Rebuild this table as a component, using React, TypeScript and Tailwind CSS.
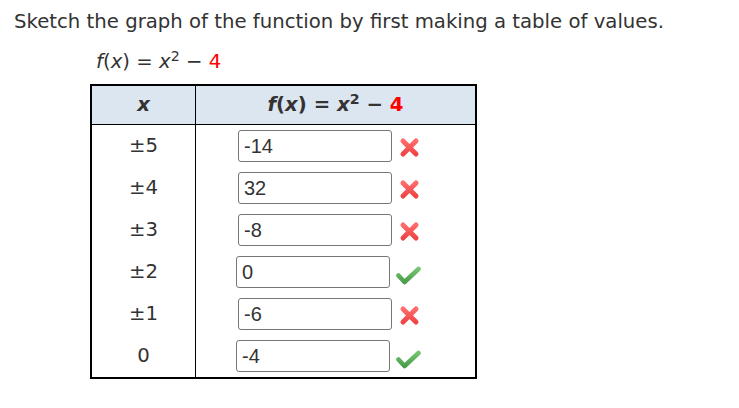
import React from "react";

interface Row {
  x: string;
  value: string;
  correct: boolean;
}

const rows: Row[] = [
  { x: "±5", value: "-14", correct: false },
  { x: "±4", value: "32", correct: false },
  { x: "±3", value: "-8", correct: false },
  { x: "±2", value: "0", correct: true },
  { x: "±1", value: "-6", correct: false },
  { x: "0", value: "-4", correct: true },
];

const WrongIcon = () => (
  <svg width="21" height="21" viewBox="0 0 21 21" className="ml-[7px] mt-[7px] shrink-0">
    <defs>
      <linearGradient id="xg" x1="0" y1="0" x2="0" y2="1">
        <stop offset="0" stopColor="#ff6c6c" />
        <stop offset="1" stopColor="#ee4545" />
      </linearGradient>
    </defs>
    <path d="M4 4 L17 17 M17 4 L4 17" stroke="url(#xg)" strokeWidth="5" strokeLinecap="round" fill="none" />
  </svg>
);

const RightIcon = () => (
  <svg width="25" height="19" viewBox="0 0 25 19" className="ml-[6px] mt-[10px] shrink-0">
    <defs>
      <linearGradient id="cg" x1="0" y1="0" x2="0" y2="1">
        <stop offset="0" stopColor="#74c472" />
        <stop offset="1" stopColor="#4a9e48" />
      </linearGradient>
    </defs>
    <path d="M2.5 9.5 L8.5 16 L22.5 3" stroke="url(#cg)" strokeWidth="4.6" strokeLinecap="round" strokeLinejoin="round" fill="none" />
  </svg>
);

const Formula = ({ bold }: { bold?: boolean }) => (
  <span className={bold ? "font-bold" : ""}>
    <i>f</i>(<i>x</i>) = <i>x</i>
    <sup className="text-[0.72em]">2</sup> − <span className="text-[#ff0000]">4</span>
  </span>
);

export default function App() {
  return (
    <div className="w-[739px] h-[408px] bg-white text-[#333] font-['DejaVu_Sans',Verdana,sans-serif] text-[19.7px] pl-[14px] pt-[11px]">
      <p className="leading-[22px]">Sketch the graph of the function by first making a table of values.</p>
      <p className="leading-[22px] mt-[18px] ml-[82px]">
        <Formula />
      </p>

      <div className="mt-[11px] ml-[76px] w-[387px] border-2 border-black">
        <div className="flex h-[39px] bg-[#dce6f1] border-b border-black">
          <div className="w-[104px] border-r border-black flex items-center justify-center font-bold italic">
            x
          </div>
          <div className="flex-1 flex items-center justify-center">
            <Formula bold />
          </div>
        </div>
        {rows.map((row) => (
          <div key={row.x} className="flex h-[42px]">
            <div className="w-[104px] border-r border-black flex items-center justify-center">
              {row.x}
            </div>
            <div className={`flex-1 flex items-start pt-[5px] ${row.correct ? "pl-[40px]" : "pl-[42px]"}`}>
              <input
                readOnly
                value={row.value}
                className="w-[154px] h-[32px] border border-[#767676] rounded-[3px] px-[5px] font-['Liberation_Sans',Arial,sans-serif] text-[20px] text-[#333] outline-none"
              />
              {row.correct ? <RightIcon /> : <WrongIcon />}
            </div>
          </div>
        ))}
      </div>
    </div>
  );
}
